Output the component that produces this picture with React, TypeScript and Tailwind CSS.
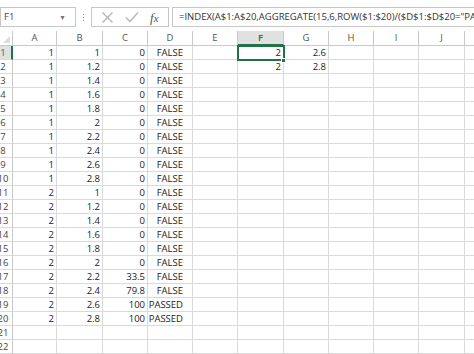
import React from 'react';

const COLS = ['A', 'B', 'C', 'D', 'E', 'F', 'G', 'H', 'I', 'J', 'K'];
const WIDTHS = [44, 46, 45, 45, 45, 46, 45, 45, 45, 46, 40];

const B_VALS = ['1', '1.2', '1.4', '1.6', '1.8', '2', '2.2', '2.4', '2.6', '2.8'];
const C_VALS: Record<number, string> = { 17: '33.5', 18: '79.8', 19: '100', 20: '100' };

function cellValue(row: number, col: string): string {
  if (row > 20) return '';
  if (col === 'A') return row <= 10 ? '1' : '2';
  if (col === 'B') return B_VALS[(row - 1) % 10];
  if (col === 'C') return C_VALS[row] ?? '0';
  if (col === 'D') return row >= 19 ? 'PASSED' : 'FALSE';
  if (col === 'F' && row <= 2) return '2';
  if (col === 'G' && row === 1) return '2.6';
  if (col === 'G' && row === 2) return '2.8';
  return '';
}

const gridCols = `13px ${WIDTHS.map((w) => `${w}px`).join(' ')}`;

function Toolbar() {
  return (
    <div className="h-[31px] flex items-start pt-[7px] bg-white">
      <div className="w-[76px] h-[20px] border border-[#c6c6c6] flex items-center justify-between pl-[3px] pr-[9px] text-[#444]">
        <span>F1</span>
        <span className="text-[7px] text-[#777]">▼</span>
      </div>
      <div className="w-[15px] flex flex-col items-center justify-center gap-[2px] h-[20px]">
        <span className="w-[1px] h-[1px] bg-[#999]" />
        <span className="w-[1px] h-[1px] bg-[#999]" />
        <span className="w-[1px] h-[1px] bg-[#999]" />
      </div>
      <div className="w-[78px] h-[20px] border border-[#c6c6c6] flex items-center justify-around px-[4px]">
        <svg width="13" height="13" viewBox="0 0 13 13">
          <path d="M1.5 1.5 L11.5 11.5 M11.5 1.5 L1.5 11.5" stroke="#b4b4b4" strokeWidth="1.3" fill="none" />
        </svg>
        <svg width="14" height="12" viewBox="0 0 14 12">
          <path d="M1 6.5 L5 10.5 L13 1.5" stroke="#b4b4b4" strokeWidth="1.3" fill="none" />
        </svg>
        <span className="text-[13px] italic text-[#555] font-['Liberation_Serif',serif] leading-none">
          f<span className="text-[11px]">x</span>
        </span>
      </div>
      <div className="ml-[3px] flex-1 h-[20px] border border-r-0 border-[#c6c6c6] flex items-center pl-[6px] overflow-hidden whitespace-nowrap text-[#333]">
        =INDEX(A$1:A$20,AGGREGATE(15,6,ROW($1:$20)/($D$1:$D$20="PASSED"),1))
      </div>
    </div>
  );
}

function HeaderRow() {
  return (
    <>
      <div className="h-[15px] border-r border-b border-[#c9c9c9] relative bg-white">
        <div className="absolute right-[2px] bottom-[2px] w-0 h-0 border-l-[7px] border-l-transparent border-b-[7px] border-b-[#dcdcdc]" />
      </div>
      {COLS.map((c) =>
        c === 'F' ? (
          <div
            key={c}
            className="h-[15px] bg-[#e1e1e1] border-r border-[#c9c9c9] border-b-2 border-b-[#217346] flex items-center justify-center text-[#217346] font-semibold"
          >
            {c}
          </div>
        ) : (
          <div
            key={c}
            className="h-[15px] border-r border-b border-[#c9c9c9] flex items-center justify-center text-[#555]"
          >
            {c}
          </div>
        )
      )}
    </>
  );
}

function DataRow({ row }: { row: number }) {
  return (
    <>
      <div
        className={`h-[14px] border-b border-[#dadada] overflow-hidden whitespace-nowrap flex items-center text-[#444] ${
          row === 1 ? 'border-r-2 border-r-[#217346] bg-[#e1e1e1] text-[#217346]' : 'border-r border-r-[#c9c9c9]'
        }`}
      >
        <div className="w-[26px] shrink-0 -ml-[10px] text-center">{row}</div>
      </div>
      {COLS.map((c) => {
        const v = cellValue(row, c);
        return (
          <div
            key={c}
            className={`h-[14px] border-r border-b border-[#dadada] flex items-center justify-end overflow-hidden whitespace-nowrap text-[#222] ${
              c === 'D' ? 'pr-[9px]' : 'pr-[2px]'
            }`}
          >
            {v}
          </div>
        );
      })}
    </>
  );
}

export default function App() {
  const rows = Array.from({ length: 22 }, (_, i) => i + 1);
  return (
    <div className="w-[474px] h-[354px] overflow-hidden bg-white text-[9.5px] font-['Segoe_UI','Open_Sans',sans-serif] leading-none">
      <Toolbar />
      <div className="relative">
        <div className="grid" style={{ gridTemplateColumns: gridCols }}>
          <HeaderRow />
          {rows.map((r) => (
            <DataRow key={r} row={r} />
          ))}
        </div>
        {/* active cell F1 */}
        <div className="absolute left-[237px] top-[14px] w-[48px] h-[16px] border-2 border-[#217346] pointer-events-none" />
        <div className="absolute left-[281px] top-[27px] w-[5px] h-[5px] bg-[#217346] border border-white" />
      </div>
    </div>
  );
}
